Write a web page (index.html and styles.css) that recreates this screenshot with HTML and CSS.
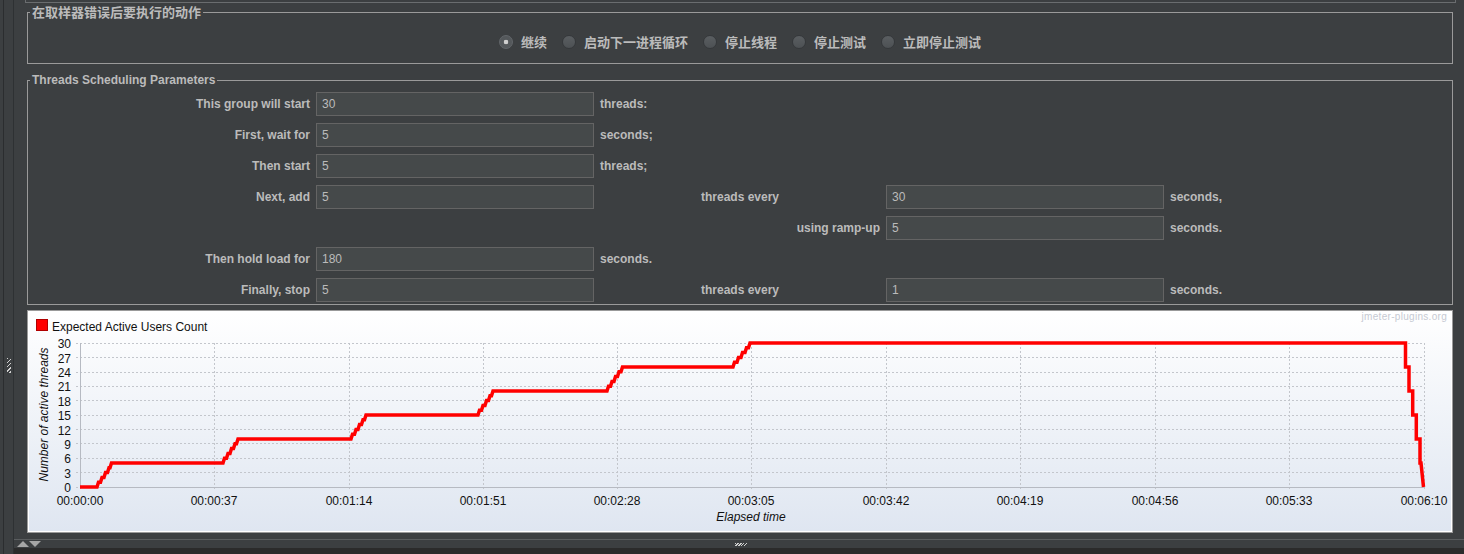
FILE: index.html
```html
<!DOCTYPE html>
<html lang="zh">
<head>
<meta charset="utf-8">
<title>Stepping Thread Group</title>
<link rel="stylesheet" href="styles.css">
</head>
<body>
<div class="window">
  <div class="strip"><div class="strip-inner"><span class="grip"></span></div></div>
  <div class="pane">
    <div class="main">
      <div class="topbox"></div>
      <fieldset class="group g1">
        <legend>在取样器错误后要执行的动作</legend>
        <div class="radios">
          <label class="radio"><span class="dot on"></span>继续</label>
          <label class="radio"><span class="dot"></span>启动下一进程循环</label>
          <label class="radio"><span class="dot"></span>停止线程</label>
          <label class="radio"><span class="dot"></span>停止测试</label>
          <label class="radio"><span class="dot"></span>立即停止测试</label>
        </div>
      </fieldset>
      <fieldset class="group g2">
        <legend>Threads Scheduling Parameters</legend>
        <div class="form">
          <span class="lbl c1">This group will start</span>
          <input class="field" value="30" readonly>
          <span class="unit">threads:</span>

          <span class="lbl c1">First, wait for</span>
          <input class="field" value="5" readonly>
          <span class="unit">seconds;</span>

          <span class="lbl c1">Then start</span>
          <input class="field" value="5" readonly>
          <span class="unit">threads;</span>

          <span class="lbl c1">Next, add</span>
          <input class="field" value="5" readonly>
          <span class="unit c4">threads every</span>
          <input class="field" value="30" readonly>
          <span class="unit">seconds,</span>

          <span class="lbl c4">using ramp-up</span>
          <input class="field" value="5" readonly>
          <span class="unit">seconds.</span>

          <span class="lbl c1">Then hold load for</span>
          <input class="field" value="180" readonly>
          <span class="unit">seconds.</span>

          <span class="lbl c1">Finally, stop</span>
          <input class="field" value="5" readonly>
          <span class="unit c4">threads every</span>
          <input class="field" value="1" readonly>
          <span class="unit">seconds.</span>
        </div>
      </fieldset>
      <div class="chart">
        <svg class="plot" viewBox="29 312 1422 219" width="1422" height="219" xmlns="http://www.w3.org/2000/svg">
          <defs>
            <linearGradient id="bg" x1="0" y1="0" x2="0" y2="1">
              <stop offset="0" stop-color="#ffffff"/>
              <stop offset="1" stop-color="#dfe6f1"/>
            </linearGradient>
          </defs>
          <rect x="29" y="312" width="1422" height="219" fill="url(#bg)"/>
          <text class="wm" x="1447" y="320" text-anchor="end">jmeter-plugins.org</text>
          <rect x="36.5" y="319.5" width="11" height="11" fill="#ff0000" stroke="#b00000"/>
          <text class="leg" x="52" y="331">Expected Active Users Count</text>
          <g class="grid">
            <line x1="76" y1="343.5" x2="1424" y2="343.5"/>
            <line x1="76" y1="357.5" x2="1424" y2="357.5"/>
            <line x1="76" y1="372.5" x2="1424" y2="372.5"/>
            <line x1="76" y1="386.5" x2="1424" y2="386.5"/>
            <line x1="76" y1="400.5" x2="1424" y2="400.5"/>
            <line x1="76" y1="415.5" x2="1424" y2="415.5"/>
            <line x1="76" y1="429.5" x2="1424" y2="429.5"/>
            <line x1="76" y1="443.5" x2="1424" y2="443.5"/>
            <line x1="76" y1="458.5" x2="1424" y2="458.5"/>
            <line x1="76" y1="472.5" x2="1424" y2="472.5"/>
            <line x1="76" y1="487.5" x2="80" y2="487.5"/>
            <line x1="80.5" y1="487" x2="80.5" y2="491"/>
            <line x1="214.5" y1="343" x2="214.5" y2="491"/>
            <line x1="349.5" y1="343" x2="349.5" y2="491"/>
            <line x1="483.5" y1="343" x2="483.5" y2="491"/>
            <line x1="617.5" y1="343" x2="617.5" y2="491"/>
            <line x1="751.5" y1="343" x2="751.5" y2="491"/>
            <line x1="886.5" y1="343" x2="886.5" y2="491"/>
            <line x1="1020.5" y1="343" x2="1020.5" y2="491"/>
            <line x1="1155.5" y1="343" x2="1155.5" y2="491"/>
            <line x1="1289.5" y1="343" x2="1289.5" y2="491"/>
            <line x1="1424.5" y1="343" x2="1424.5" y2="491"/>
          </g>
          <g class="axis">
            <line x1="80.5" y1="343" x2="80.5" y2="488"/>
            <line x1="80" y1="487.5" x2="1425" y2="487.5"/>
          </g>
          <g class="yt" text-anchor="end">
            <text x="71" y="348">30</text>
            <text x="71" y="362.5">27</text>
            <text x="71" y="377">24</text>
            <text x="71" y="391">21</text>
            <text x="71" y="405.5">18</text>
            <text x="71" y="420">15</text>
            <text x="71" y="434.5">12</text>
            <text x="71" y="448.5">9</text>
            <text x="71" y="463">6</text>
            <text x="71" y="477.5">3</text>
            <text x="71" y="492">0</text>
          </g>
          <g class="xt" text-anchor="middle">
            <text x="80" y="505">00:00:00</text>
            <text x="214" y="505">00:00:37</text>
            <text x="349" y="505">00:01:14</text>
            <text x="483" y="505">00:01:51</text>
            <text x="617" y="505">00:02:28</text>
            <text x="751" y="505">00:03:05</text>
            <text x="886" y="505">00:03:42</text>
            <text x="1020" y="505">00:04:19</text>
            <text x="1155" y="505">00:04:56</text>
            <text x="1289" y="505">00:05:33</text>
            <text x="1424" y="505">00:06:10</text>
          </g>
          <text class="ttl" x="751" y="521" text-anchor="middle">Elapsed time</text>
          <text class="ttl" transform="translate(47.5 414.5) rotate(-90)" text-anchor="middle">Number of active threads</text>
          <path class="line" d="M80 487 H97 L98.5 482.2 H100.5 L102 477.4 H104 L105.5 472.6 H107.5 L109 467.8 H110 L111.5 463 H223 L224.5 458.2 H226.5 L228 453.4 H230 L231.5 448.6 H233.5 L235 443.8 H236.5 L238 439 H351 L352.5 434.2 H354.5 L356 429.4 H358 L359.5 424.6 H361.5 L363 419.8 H364.5 L366 415 H478 L479.5 410.2 H481.5 L483 405.4 H485 L486.5 400.6 H488.5 L490 395.8 H491.5 L493 391 H607 L608.5 386.2 H610.5 L612 381.4 H614 L615.5 376.6 H617.5 L619 371.8 H621 L622.5 367 H733 L734.5 362.2 H737 L738.5 357.4 H741 L742.5 352.6 H745 L746.5 347.8 H748.5 L750 343 H1405.5 V367 H1409 V391 H1412.7 V415 H1416.3 V439 H1420 V463 H1421 L1423.5 487"/>
        </svg>
      </div>
    </div>
    <div class="splitter">
      <div class="arrows"><span class="up"></span><span class="down"></span></div>
      <span class="sgrip"></span>
      <span></span>
    </div>
    <div class="bottom"></div>
  </div>
</div>
</body>
</html>
```

FILE: styles.css
```css
* { box-sizing: border-box; }
html, body { margin: 0; padding: 0; }
body {
  background: #3c3f41;
  color: #bbbbbb;
  font-family: "Liberation Sans", Arial, "Noto Sans CJK SC", sans-serif;
  font-size: 12px;
  overflow: hidden;
}
.window {
  display: grid;
  grid-template-columns: 14px 1fr;
  height: 554px;
}
.strip {
  padding-left: 3px;
  background: #3c3f41;
}
.strip-inner {
  height: 100%;
  border-left: 1px solid #2b2d2f;
  border-right: 1px solid #2e3133;
  display: flex;
  flex-direction: column;
  align-items: center;
}
.grip {
  margin-top: 358px;
  width: 4px;
  height: 15px;
  background: repeating-linear-gradient(135deg, #d2d2d2 0 1px, transparent 1px 3px);
}
.pane {
  display: flex;
  flex-direction: column;
  min-width: 0;
}
.main {
  flex: 1;
  padding: 0 11px 0 13px;
}
.topbox {
  height: 3px;
  margin: 0 -3px 0 -2px;
  border: 1px solid #6a6d6f;
  border-top: none;
}
fieldset.group {
  margin: 0;
  border: 1px solid #9a9a9a;
  min-width: 0;
}
.group legend {
  margin-left: 2px;
  padding: 0 2px;
  color: #bbbbbb;
  font-weight: bold;
}
fieldset.g1 {
  margin-top: 1px;
  padding: 12px 0 11px;
}
.g1 legend {
  font: bold 13px/16px "Noto Sans CJK SC", sans-serif;
}
.radios {
  display: flex;
  justify-content: center;
  align-items: center;
  gap: 15px;
  height: 20px;
}
.radio {
  display: flex;
  align-items: center;
  gap: 8px;
  font: bold 13px/20px "Noto Sans CJK SC", sans-serif;
  color: #bbbbbb;
}
.dot {
  width: 14px;
  height: 14px;
  border-radius: 50%;
  border: 1px solid #35383b;
  background: linear-gradient(#5a5e61, #4d5154);
}
.dot.on {
  border-color: #62666a;
  background: radial-gradient(circle, #cfcfcf 0 2px, #54585b 2.6px);
}
fieldset.g2 {
  margin-top: 9px;
  padding: 5px 0 2px;
}
.g2 legend {
  font: bold 12px/14px "Liberation Sans", Arial, sans-serif;
}
.form {
  display: grid;
  grid-template-columns: 282px 278px 95px 179px 278px 1fr;
  column-gap: 6px;
  row-gap: 7px;
  grid-auto-rows: 24px;
  align-items: center;
}
.c1 { grid-column: 1; }
.c4 { grid-column: 4; }
.lbl {
  font-weight: bold;
  text-align: right;
  white-space: nowrap;
}
.unit {
  font-weight: bold;
  white-space: nowrap;
}
.unit.c4 { text-align: left; }
.field {
  height: 24px;
  width: 100%;
  margin: 0;
  background: #45494a;
  border: 1px solid #646464;
  border-radius: 0;
  color: #bbbbbb;
  font: 12px "Liberation Sans", Arial, sans-serif;
  padding: 0 0 0 5px;
  outline: none;
}
.chart {
  margin-top: 5px;
  height: 223px;
  border: 1px solid #9a9a9a;
  background: #ffffff;
  padding: 1px;
}
.plot {
  display: block;
  font-family: "Liberation Sans", Arial, sans-serif;
}
.plot .wm {
  font-size: 10px;
  letter-spacing: 0.3px;
  fill: #c6cad3;
}
.plot .leg {
  font-size: 12px;
  fill: #111111;
}
.plot .grid line {
  stroke: #c3c6cc;
  stroke-width: 1;
  stroke-dasharray: 2 2;
  shape-rendering: crispEdges;
}
.plot .axis line {
  stroke: #b6bac2;
  stroke-width: 1;
  shape-rendering: crispEdges;
}
.plot .yt text,
.plot .xt text {
  font-size: 12px;
  fill: #111111;
}
.plot .ttl {
  font-size: 12px;
  font-style: italic;
  fill: #111111;
}
.plot .line {
  fill: none;
  stroke: #ff0000;
  stroke-width: 3.5;
  stroke-linejoin: miter;
}
.splitter {
  height: 9px;
  border-top: 1px solid #5a5d5f;
  display: grid;
  grid-template-columns: 1fr auto 1fr;
  align-items: center;
  padding-left: 3px;
}
.arrows {
  display: flex;
}
.up {
  width: 0;
  height: 0;
  border-left: 6px solid transparent;
  border-right: 6px solid transparent;
  border-bottom: 6px solid #a6a6a6;
}
.down {
  width: 0;
  height: 0;
  border-left: 6px solid transparent;
  border-right: 6px solid transparent;
  border-top: 6px solid #a6a6a6;
}
.sgrip {
  width: 12px;
  height: 3px;
  background: repeating-linear-gradient(135deg, #d0d0d0 0 1px, transparent 1px 2px);
}
.bottom {
  height: 6px;
  background: #2b2b2b;
}
```
